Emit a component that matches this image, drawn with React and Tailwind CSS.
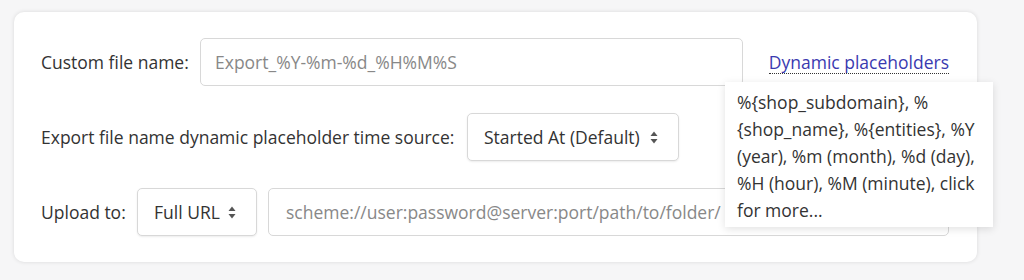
import React from "react";

const font = { fontFamily: '"Open Sans", "Noto Sans", sans-serif' };

function Chevrons() {
  return (
    <svg width="8" height="13" viewBox="0 0 8 13" className="fill-[#555]">
      <path d="M4 0.5 L7.5 5 L0.5 5 Z" />
      <path d="M4 12.5 L7.5 8 L0.5 8 Z" />
    </svg>
  );
}

function SelectBox({ label, className }) {
  return (
    <div
      className={
        "flex h-[48px] items-center justify-between rounded-[5px] border border-[#d8d8d8] bg-white pl-4 pr-[20px] text-[#333] shadow-[0_1px_2px_rgba(0,0,0,0.08)] " +
        className
      }
    >
      <span>{label}</span>
      <Chevrons />
    </div>
  );
}

export default function App() {
  return (
    <div
      className="min-h-[280px] bg-[#f6f6f7] pl-[14px] pr-[47px] pt-[12px] text-[17.5px] text-[#333]"
      style={font}
    >
      <div className="relative flex flex-col gap-[27px] rounded-[10px] bg-white px-[27px] pr-[28px] py-[26px] shadow-[0_0_4px_rgba(0,0,0,0.12)]">
        {/* Custom file name */}
        <div className="flex h-[48px] items-center">
          <span className="w-[159px] shrink-0">Custom file name:</span>
          <div className="flex h-full flex-1 items-center rounded-[5px] border border-[#d8d8d8] px-[14px] text-[#888]">
            Export_%Y-%m-%d_%H%M%S
          </div>
          <a className="ml-[26px] border-b border-dotted border-[#333] leading-[22px] text-[#3a3ab0]">
            Dynamic placeholders
          </a>
        </div>

        {/* Time source */}
        <div className="flex h-[48px] items-center">
          <span className="w-[426px] shrink-0">
            Export file name dynamic placeholder time source:
          </span>
          <SelectBox label="Started At (Default)" className="w-[212px]" />
        </div>

        {/* Upload to */}
        <div className="flex h-[48px] items-center">
          <span className="w-[96px] shrink-0">Upload to:</span>
          <SelectBox label="Full URL" className="w-[120px]" />
          <div className="ml-[11px] flex h-full flex-1 items-center rounded-[5px] border border-[#d8d8d8] px-[17px] text-[#888]">
            scheme://user:password@server:port/path/to/folder/
          </div>
        </div>

        {/* Tooltip */}
        <div className="absolute left-[711px] top-[70px] w-[268px] bg-white px-[12px] pb-[3px] pt-[7px] leading-[27px] text-[#333] shadow-[0_2px_8px_rgba(0,0,0,0.12)]">
          %{"{"}shop_subdomain{"}"}, %{"{"}shop_name{"}"}, %{"{"}entities{"}"}, %Y
          (year), %m (month), %d (day), %H (hour), %M (minute), click for more...
        </div>
      </div>
    </div>
  );
}
